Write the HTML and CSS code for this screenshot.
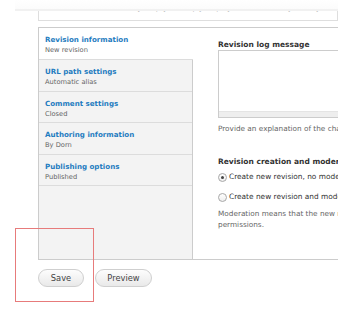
FILE: index.html
```html
<!DOCTYPE html>
<html>
<head>
<meta charset="utf-8">
<link rel="stylesheet" href="styles.css">
</head>
<body>
<div class="page">
  <div class="topshade"></div>
  <div class="topbox"><p class="cut">Leave the summary empty to simply display a trimmed body text by using your display type</p></div>
  <div class="vtabs">
    <ul class="menu">
      <li class="tab selected"><a class="tab-title">Revision information</a><span class="tab-summary">New revision</span></li>
      <li class="tab"><a class="tab-title">URL path settings</a><span class="tab-summary">Automatic alias</span></li>
      <li class="tab"><a class="tab-title">Comment settings</a><span class="tab-summary">Closed</span></li>
      <li class="tab"><a class="tab-title">Authoring information</a><span class="tab-summary">By Dorn</span></li>
      <li class="tab"><a class="tab-title">Publishing options</a><span class="tab-summary">Published</span></li>
    </ul>
    <div class="pane">
      <label class="label">Revision log message</label>
      <div class="textarea"><div class="ta-body"></div><div class="grip"></div></div>
      <p class="desc first">Provide an explanation of the changes you are making.</p>
      <p class="label heading">Revision creation and moderation</p>
      <div class="radio r1"><span class="circle checked"></span><span>Create new revision, no moderation</span></div>
      <div class="radio r2"><span class="circle"></span><span>Create new revision and moderate</span></div>
      <p class="desc moder">Moderation means that the new revision is not publicly visible until approved by someone with the appropriate<br>permissions.</p>
    </div>
  </div>
  <div class="actions">
    <button class="btn save">Save</button>
    <button class="btn preview">Preview</button>
  </div>
  <div class="highlight"></div>
</div>
</body>
</html>
```
FILE: styles.css
```css
html, body {
  margin: 0;
  padding: 0;
  background: #fff;
}
body {
  font-family: "DejaVu Sans", Verdana, sans-serif;
  color: #333;
}
.page {
  position: relative;
  width: 338px;
  height: 319px;
  overflow: hidden;
}
.topshade {
  margin-left: 15px;
  height: 9px;
  background: linear-gradient(#ffffff, #fbfbfb);
  border-bottom: 2px solid #f1f1f1;
}
.topbox {
  margin-left: 38px;
  height: 9px;
  border: 1px solid #dedede;
  border-top: none;
  overflow: hidden;
}
.cut {
  margin: -8px 0 0 30px;
  font-size: 7.3px;
  line-height: 10px;
  color: #888;
  white-space: nowrap;
}
.vtabs {
  box-sizing: border-box;
  margin: 6px 0 0 38px;
  width: 400px;
  height: 233px;
  border: 1px solid #cccccc;
  display: flex;
}
.menu {
  list-style: none;
  margin: 0;
  padding: 0;
  width: 153px;
  flex: none;
  background: #f3f3f3;
  border-right: 1px solid #cccccc;
  display: flex;
  flex-direction: column;
}
.tab {
  padding: 6px 6px 3.5px;
  border-bottom: 1px solid #dcdcdc;
  display: flex;
  flex-direction: column;
}
.tab.selected {
  background: #fff;
  margin-right: -1px;
  padding-right: 7px;
  padding-bottom: 4px;
}
.tab-title {
  font-size: 7.1px;
  font-weight: bold;
  line-height: 11px;
  color: #1f7cc0;
  white-space: nowrap;
}
.tab-summary {
  font-size: 6.7px;
  line-height: 10px;
  color: #666;
  white-space: nowrap;
}
.pane {
  flex: 1;
  padding: 12px 0 0 25px;
  overflow: hidden;
  white-space: nowrap;
}
.label {
  display: block;
  margin: 0;
  font-size: 7.5px;
  font-weight: bold;
  line-height: 9px;
  color: #333;
}
.textarea {
  margin-top: 1px;
  width: 220px;
  border: 1px solid #cccccc;
  background: #fff;
}
.ta-body {
  height: 60px;
}
.grip {
  height: 5px;
  background: #eeeeee;
  border-top: 1px solid #e4e4e4;
}
.desc {
  margin: 0;
  font-size: 7.3px;
  line-height: 10px;
  color: #666;
}
.desc.first {
  margin-top: 6px;
}
.heading {
  margin-top: 23px;
  line-height: 10px;
}
.radio {
  display: flex;
  align-items: center;
  gap: 2px;
  font-size: 7.4px;
  line-height: 10px;
  color: #333;
}
.r1 { margin-top: 5px; }
.r2 { margin-top: 10px; }
.circle {
  box-sizing: border-box;
  width: 9px;
  height: 9px;
  border: 1px solid #a8a8a8;
  border-radius: 50%;
  background: linear-gradient(#ffffff, #eeeeee);
  display: flex;
  align-items: center;
  justify-content: center;
}
.circle.checked::after {
  content: "";
  width: 3px;
  height: 3px;
  border-radius: 50%;
  background: #444;
}
.desc.moder {
  margin-top: 6px;
  line-height: 11px;
}
.actions {
  margin: 9px 0 0 38px;
  display: flex;
  gap: 11px;
}
.btn {
  box-sizing: border-box;
  height: 18px;
  padding: 0;
  border: 1px solid #cfcfcf;
  border-radius: 10px;
  background: linear-gradient(#fdfdfd, #e9e9e9);
  font-family: "DejaVu Sans", Verdana, sans-serif;
  font-size: 8.3px;
  color: #444;
  line-height: 16px;
  text-align: center;
}
.save { width: 46px; }
.preview { width: 57px; }
.highlight {
  position: absolute;
  left: 15px;
  top: 228px;
  width: 77px;
  height: 72px;
  border: 1px solid #e77b7b;
}
```
